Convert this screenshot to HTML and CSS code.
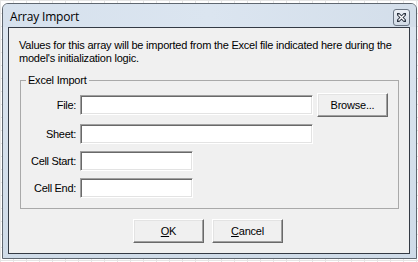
FILE: index.html
```html
<!DOCTYPE html>
<html>
<head>
<meta charset="utf-8">
<link rel="stylesheet" href="styles.css">
</head>
<body>
<div class="window">
  <div class="titlebar">
    <span class="title">Array Import</span>
    <span class="close">
      <svg width="9" height="9" viewBox="0 0 9 9">
        <path d="M1 1 L8 8 M8 1 L1 8" stroke="#2a3340" stroke-width="3.2" stroke-linecap="square"/>
        <path d="M1.5 1.5 L7.5 7.5 M7.5 1.5 L1.5 7.5" stroke="#ffffff" stroke-width="1.4"/>
      </svg>
    </span>
  </div>
  <div class="content">
    <p class="desc">Values for this array will be imported from the Excel file indicated here during the<br>model's initialization logic.</p>
    <fieldset class="group">
      <legend class="legend">Excel Import</legend>
      <div class="form">
        <span class="label">File:</span><span class="input wide"></span><span class="btn">Browse...</span>
        <span class="label">Sheet:</span><span class="input wide"></span><span></span>
        <span class="label">Cell Start:</span><span class="input short"></span><span></span>
        <span class="label">Cell End:</span><span class="input short"></span><span></span>
      </div>
    </fieldset>
    <div class="actions">
      <span class="btn"><u>O</u>K</span>
      <span class="btn"><u>C</u>ancel</span>
    </div>
  </div>
</div>
</body>
</html>
```

FILE: styles.css
```css
html, body {
  margin: 0;
  padding: 0;
}
body {
  width: 418px;
  height: 262px;
  overflow: hidden;
  background-color: #ffffff;
  background-image:
    linear-gradient(to right, #e4e4e4 1px, transparent 1px),
    linear-gradient(to bottom, #e4e4e4 1px, transparent 1px);
  background-size: 13px 13px;
  font-family: "Liberation Sans", Arial, sans-serif;
  font-size: 11px;
  color: #000;
}
.window {
  margin: 3px 0 0 2px;
  width: 415px;
  height: 256px;
  box-sizing: border-box;
  border: 1px solid #5f6770;
  border-radius: 6px 6px 0 0;
  background: linear-gradient(to bottom, #dde6f0 0%, #cfdbe8 100%);
  padding: 0 6px 4px 5px;
  display: flex;
  flex-direction: column;
}
.titlebar {
  height: 23px;
  display: flex;
  align-items: flex-start;
  justify-content: space-between;
  background: linear-gradient(to right, #d6e1ed 0%, #dbe5f0 50%, #d3deea 100%);
  margin: 0 -6px 0 -5px;
  padding: 0 6px 0 7px;
  border-radius: 5px 5px 0 0;
}
.title {
  font-family: "Open Sans", "Noto Sans", sans-serif;
  font-size: 12px;
  line-height: 16px;
  margin-top: 5px;
  letter-spacing: -0.2px;
  color: #000;
}
.close {
  margin-top: 5px;
  width: 17px;
  height: 17px;
  box-sizing: border-box;
  border: 1px solid #6b7684;
  border-radius: 3px;
  background: linear-gradient(to bottom, #eef2f7 0%, #dde4ec 50%, #d2dbe6 100%);
  display: flex;
  align-items: center;
  justify-content: center;
}
.content {
  flex: 1;
  border: 1px solid #333a44;
  background: #f0f0f0;
  padding: 11px 11px 8px 9px;
  display: flex;
  flex-direction: column;
  letter-spacing: -0.22px;
}
.desc {
  margin: 0;
  padding-left: 1px;
  line-height: 13px;
  white-space: nowrap;
}
.group {
  margin: 9px 0 0 2px;
  width: 379px;
  box-sizing: border-box;
  border: 1px solid #a9a9a9;
  padding: 6px 0 10px 0;
}
.legend {
  margin-left: 5px;
  padding: 0 2px;
  line-height: 13px;
}
.form {
  display: grid;
  grid-template-columns: 55px 233px 71px;
  grid-template-rows: 24px 20px 20px 20px;
  column-gap: 4px;
  row-gap: 7px;
  align-items: center;
}
.label {
  text-align: right;
  line-height: 13px;
  letter-spacing: -0.3px;
}
.input {
  height: 20px;
  box-sizing: border-box;
  background: #fff;
  border-top: 1px solid #a0a0a0;
  border-left: 1px solid #a0a0a0;
  border-right: 1px solid #ffffff;
  border-bottom: 1px solid #ffffff;
  box-shadow: inset 1px 1px 0 #696969, inset -1px -1px 0 #e3e3e3;
}
.wide { width: 233px; }
.short { width: 113px; }
.btn {
  width: 71px;
  height: 24px;
  box-sizing: border-box;
  display: flex;
  align-items: center;
  justify-content: center;
  background: #f0f0f0;
  border-top: 1px solid #ffffff;
  border-left: 1px solid #ffffff;
  border-right: 1px solid #696969;
  border-bottom: 1px solid #696969;
  box-shadow: inset -1px -1px 0 #a0a0a0, inset 1px 1px 0 #e3e3e3;
  line-height: 13px;
}
.actions {
  margin-top: 10px;
  display: flex;
  justify-content: center;
  gap: 8px;
}
```
